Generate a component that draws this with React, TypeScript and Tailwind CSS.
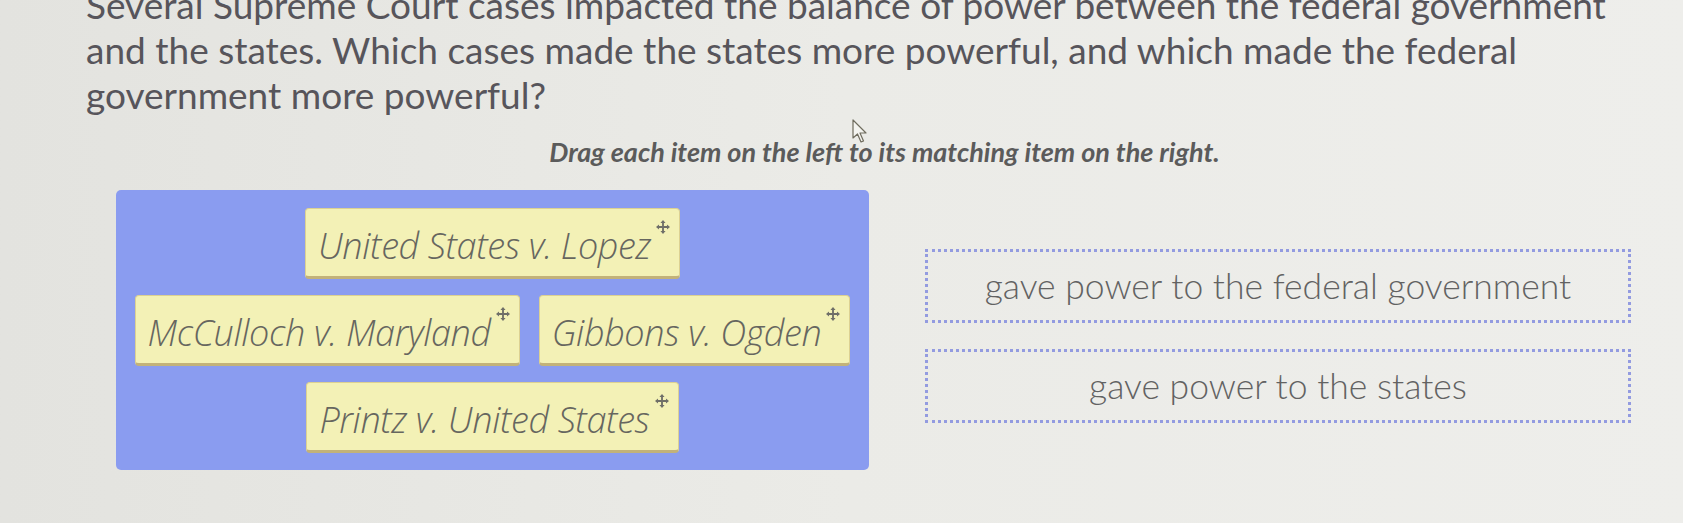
import React from 'react';

const cases = [
  'United States v. Lopez',
  'McCulloch v. Maryland',
  'Gibbons v. Ogden',
  'Printz v. United States',
];

const targets = ['gave power to the federal government', 'gave power to the states'];

function MoveIcon() {
  return (
    <svg width="14" height="14" viewBox="0 0 12 12" className="text-[#6f6f68]" fill="currentColor">
      <path d="M6 0 L8.2 2.6 H6.8 V5.2 H9.4 V3.8 L12 6 L9.4 8.2 V6.8 H6.8 V9.4 H8.2 L6 12 L3.8 9.4 H5.2 V6.8 H2.6 V8.2 L0 6 L2.6 3.8 V5.2 H5.2 V2.6 H3.8 Z" />
    </svg>
  );
}

function CaseChip({ label }: { label: string }) {
  return (
    <div className="shrink-0 h-[71px] flex items-center pl-[12px] pr-[9px] rounded-[4px] bg-[#f3f1b6] border border-[#dcd192] border-b-[3px] border-b-[#c2b27a]">
      <span className="mt-[6px] font-['Open_Sans'] italic font-light text-[36px] tracking-[-0.35px] text-[#66665f] whitespace-nowrap">
        {label}
      </span>
      <span className="self-start mt-[11px] ml-[5px]">
        <MoveIcon />
      </span>
    </div>
  );
}

function Cursor() {
  return (
    <svg
      width="16"
      height="26"
      viewBox="0 0 16 26"
      className="absolute left-[852px] top-[119px]"
    >
      <path
        d="M1 1 L1 19 L5.5 15 L9 23 L11.5 22 L8 14 L14 14 Z"
        fill="#f4f4f0"
        stroke="#6f6c5e"
        strokeWidth="1.2"
        strokeLinejoin="round"
      />
    </svg>
  );
}

export default function App() {
  return (
    <div className="relative w-[1683px] h-[523px] overflow-hidden bg-linear-to-r from-[#e3e3df] via-[#ebebe7] to-[#eeeeeb]">
      <p className="-mt-[18px] pl-[86px] font-['Lato'] text-[37px] leading-[45px] text-[#57555b] whitespace-nowrap">
        Several Supreme Court cases impacted the balance of power between the federal government
        <br />
        and the states. Which cases made the states more powerful, and which made the federal
        <br />
        government more powerful?
      </p>

      <div className="ml-[116px] w-[1515px]">
        <p className="mt-[19px] text-center font-['Lato'] font-bold italic text-[27px] leading-[32px] text-[#5b5b5b] pl-[22px]">
          Drag each item on the left to its matching item on the right.
        </p>

        <div className="mt-[22px] flex items-start gap-[56px]">
          <div className="w-[753px] h-[280px] shrink-0 rounded-[5px] bg-[#8a9cf0] pt-[18px] flex flex-col items-center gap-[16px]">
            <div className="flex justify-center">
              <CaseChip label={cases[0]} />
            </div>
            <div className="flex justify-center gap-[19px]">
              <CaseChip label={cases[1]} />
              <CaseChip label={cases[2]} />
            </div>
            <div className="flex justify-center">
              <CaseChip label={cases[3]} />
            </div>
          </div>

          <div className="mt-[59px] w-[706px] flex flex-col gap-[26px]">
            {targets.map((t) => (
              <div
                key={t}
                className="h-[74px] flex items-center justify-center border-[3px] border-dotted border-[#939be0] font-['Lato'] font-light text-[35.5px] text-[#626262]"
              >
                {t}
              </div>
            ))}
          </div>
        </div>
      </div>

      <Cursor />
    </div>
  );
}
